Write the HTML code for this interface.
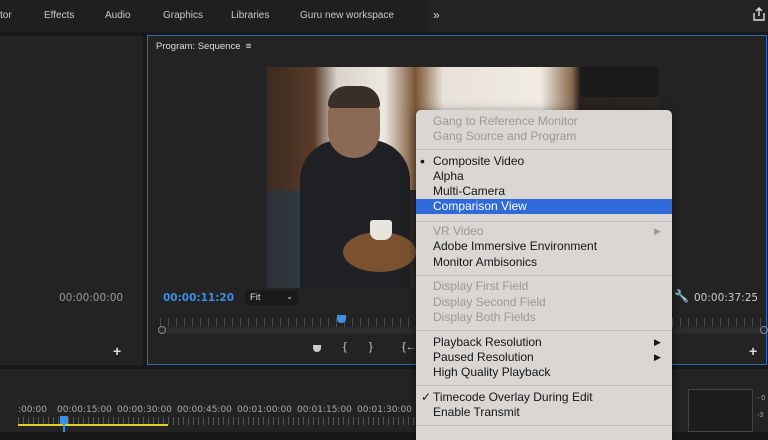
<!DOCTYPE html>
<html><head><style>
*{margin:0;padding:0;box-sizing:border-box}
body{width:768px;height:432px;background:#181818;position:relative;overflow:hidden;font-family:"Liberation Sans",sans-serif}
.a{position:absolute}
.tab{position:absolute;top:10px;font-size:10px;color:#c8c8c8}
.mi{position:absolute;left:433px;font-size:12px;color:#151515;white-space:nowrap;line-height:15px}
.dis{color:#9a9898}
.sep{position:absolute;left:416px;width:256px;height:1px;background:#bdbbbb}
.tc{position:absolute;font-size:10.5px;color:#999;font-family:"DejaVu Sans",sans-serif}
</style></head><body>
<div class="a" style="left:0;top:0;width:768px;height:32px;background:#1f1f1f"></div>
<div class="a" style="left:428px;top:0;width:340px;height:32px;background:#232323"></div>
<div class="tab" style="left:0">tor</div>
<div class="tab" style="left:44px">Effects</div>
<div class="tab" style="left:105px">Audio</div>
<div class="tab" style="left:163px">Graphics</div>
<div class="tab" style="left:231px">Libraries</div>
<div class="tab" style="left:300px">Guru new workspace</div>
<div class="tab" style="left:433px;font-size:12px;top:8px;color:#ddd">»</div>
<svg class="a" style="left:752px;top:7px" width="14" height="14"><path d="M2 6v7h10V6M7 1v8M4 4l3-3 3 3" fill="none" stroke="#ddd" stroke-width="1.4"/></svg>
<div class="a" style="left:0;top:36px;width:143px;height:329px;background:#232323"></div>
<div class="tc" style="left:59px;top:292px">00:00:00:00</div>
<div class="a" style="left:113px;top:343px;color:#ddd;font-size:14px;font-weight:bold">+</div>
<div class="a" style="left:147px;top:35px;width:620px;height:330px;background:#232323;border:1px solid #2f6cb0"></div>
<div class="a" style="left:156px;top:41px;font-size:9.5px;color:#ddd">Program: Sequence &nbsp;≡</div>
<div class="a" style="left:267px;top:67px;width:391px;height:221px;background:linear-gradient(90deg,#3b2a20 0%,#5a3a28 12%,#d8d4cc 18%,#ece8e0 30%,#7a5535 38%,#e8e2d8 45%,#f0ece4 70%,#8a6a50 78%,#2a2020 80%,#2a2622 100%)"></div>
<div class="a" style="left:267px;top:190px;width:391px;height:98px;background:linear-gradient(90deg,#2a3036 0%,#3a4650 20%,#2a2220 40%,#6a4a30 50%,#3a2a20 100%)"></div>
<div class="a" style="left:300px;top:140px;width:110px;height:148px;background:#1e2024;border-radius:40px 40px 0 0"></div>
<div class="a" style="left:328px;top:90px;width:52px;height:68px;background:#8a6a55;border-radius:24px 24px 26px 26px"></div>
<div class="a" style="left:328px;top:86px;width:52px;height:22px;background:#3a2e28;border-radius:22px 22px 4px 4px"></div>
<div class="a" style="left:580px;top:67px;width:78px;height:30px;background:#1a1a1a"></div>
<div class="a" style="left:343px;top:232px;width:73px;height:40px;background:#7a5230;border-radius:50%"></div>
<div class="a" style="left:370px;top:220px;width:22px;height:20px;background:#e8e4de;border-radius:3px 3px 8px 8px"></div>
<div class="tc" style="left:163px;top:292px;color:#3d8ee6;font-weight:bold">00:00:11:20</div>
<div class="a" style="left:245px;top:290px;width:53px;height:15px;background:#1a1a1a;font-size:9.5px;color:#ddd;padding:2px 5px">Fit<span style="float:right;font-size:8px">⌄</span></div>
<div class="a" style="left:160px;top:318px;width:605px;height:10px;background:repeating-linear-gradient(90deg,#555 0 1px,transparent 1px 8px);opacity:.8"></div>
<div class="a" style="left:160px;top:327px;width:605px;height:7px;background:#2c2c2c"></div>
<div class="a" style="left:158px;top:326px;width:8px;height:8px;border:1.5px solid #888;border-radius:50%"></div>
<div class="a" style="left:760px;top:326px;width:8px;height:8px;border:1.5px solid #888;border-radius:50%"></div>
<div class="a" style="left:337px;top:315px;width:9px;height:8px;background:#3d8ee6;border-radius:0 0 4px 4px"></div>
<div class="a" style="left:313px;top:345px;width:8px;height:7px;background:#ccc;border-radius:0 0 4px 4px"></div>
<div class="a" style="left:343px;top:341px;color:#ccc;font-size:11px">{</div>
<div class="a" style="left:369px;top:341px;color:#ccc;font-size:11px">}</div>
<div class="a" style="left:402px;top:341px;color:#ccc;font-size:11px">{←</div>
<div class="tc" style="left:694px;top:292px;color:#ccc">00:00:37:25</div>
<div class="a" style="left:674px;top:289px;color:#ddd;font-size:12px">🔧</div>
<div class="a" style="left:749px;top:343px;color:#ddd;font-size:14px;font-weight:bold">+</div>
<div class="a" style="left:0;top:369px;width:768px;height:63px;background:#232323"></div>
<div class="tc" style="left:18px;top:405px;font-size:9px;color:#aaa">:00:00</div>
<div class="tc" style="left:57px;top:405px;font-size:9px;color:#aaa">00:00:15:00</div>
<div class="tc" style="left:117px;top:405px;font-size:9px;color:#aaa">00:00:30:00</div>
<div class="tc" style="left:177px;top:405px;font-size:9px;color:#aaa">00:00:45:00</div>
<div class="tc" style="left:237px;top:405px;font-size:9px;color:#aaa">00:01:00:00</div>
<div class="tc" style="left:297px;top:405px;font-size:9px;color:#aaa">00:01:15:00</div>
<div class="tc" style="left:357px;top:405px;font-size:9px;color:#aaa">00:01:30:00</div>
<div class="a" style="left:18px;top:417px;width:400px;height:8px;background:repeating-linear-gradient(90deg,#555 0 1px,transparent 1px 5px)"></div>
<div class="a" style="left:18px;top:424px;width:150px;height:2px;background:#e0d020"></div>
<div class="a" style="left:60px;top:416px;width:8px;height:8px;background:#3d8ee6"></div>
<div class="a" style="left:63px;top:424px;width:2px;height:8px;background:#3d8ee6"></div>
<div class="a" style="left:688px;top:389px;width:65px;height:43px;border:1px solid #444;background:#1c1c1c"></div>
<div class="a" style="left:757px;top:395px;font-size:7px;color:#aaa">- 0</div>
<div class="a" style="left:757px;top:412px;font-size:7px;color:#aaa">-3</div>
<div class="a" style="left:416px;top:110px;width:256px;height:330px;background:#d9d6d4;border-radius:5px 5px 0 0;box-shadow:0 2px 10px rgba(0,0,0,.5)"></div>
<div class="a" style="left:416px;top:199px;width:256px;height:15px;background:#2f6ad8"></div>
<div class="mi dis" style="top:114px">Gang to Reference Monitor</div>
<div class="mi dis" style="top:129px">Gang Source and Program</div>
<div class="sep" style="top:149px"></div>
<div class="mi" style="top:154px;left:420px;font-size:14px">•</div>
<div class="mi" style="top:154px">Composite Video</div>
<div class="mi" style="top:169px">Alpha</div>
<div class="mi" style="top:184px">Multi-Camera</div>
<div class="mi" style="top:199px;color:#fff">Comparison View</div>
<div class="sep" style="top:221px"></div>
<div class="mi dis" style="top:224px">VR Video</div>
<div class="mi dis" style="top:224px;left:654px;font-size:9px">▶</div>
<div class="mi" style="top:239px">Adobe Immersive Environment</div>
<div class="mi" style="top:255px">Monitor Ambisonics</div>
<div class="sep" style="top:275px"></div>
<div class="mi dis" style="top:279px">Display First Field</div>
<div class="mi dis" style="top:295px">Display Second Field</div>
<div class="mi dis" style="top:310px">Display Both Fields</div>
<div class="sep" style="top:330px"></div>
<div class="mi" style="top:335px">Playback Resolution</div>
<div class="mi" style="top:335px;left:654px;font-size:9px">▶</div>
<div class="mi" style="top:350px">Paused Resolution</div>
<div class="mi" style="top:350px;left:654px;font-size:9px">▶</div>
<div class="mi" style="top:365px">High Quality Playback</div>
<div class="sep" style="top:385px"></div>
<div class="mi" style="top:390px;left:421px">✓</div>
<div class="mi" style="top:390px">Timecode Overlay During Edit</div>
<div class="mi" style="top:405px">Enable Transmit</div>
<div class="sep" style="top:425px"></div>
</body></html>
